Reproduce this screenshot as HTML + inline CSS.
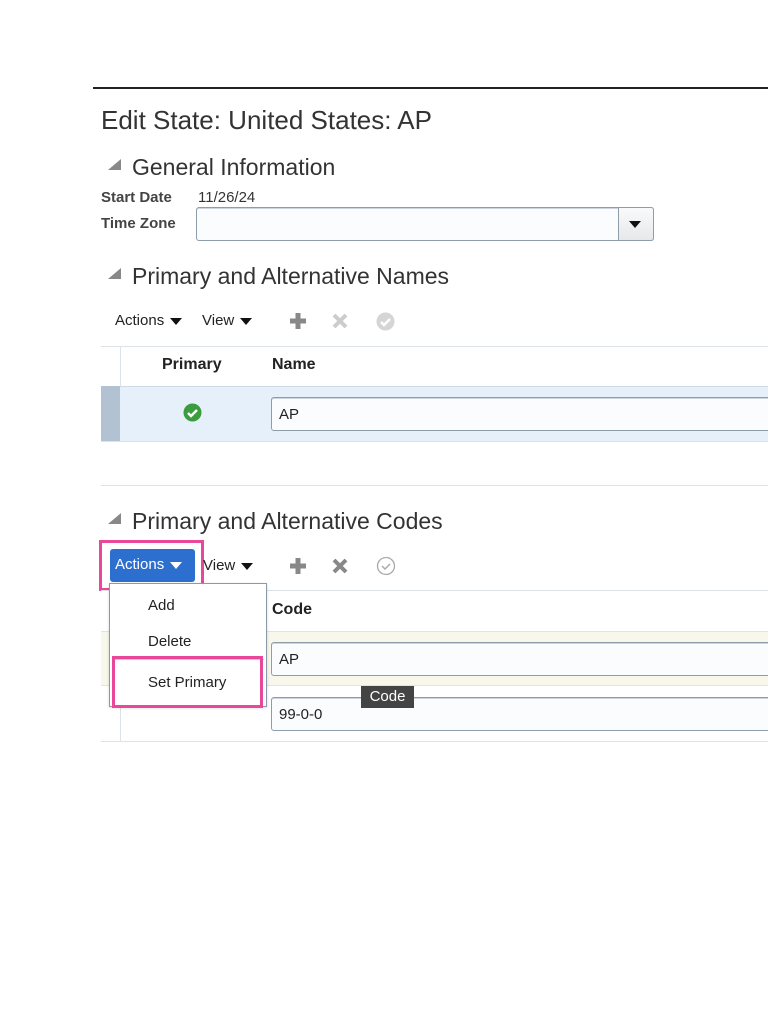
<!DOCTYPE html>
<html><head><meta charset="utf-8"><style>
*{margin:0;padding:0;box-sizing:border-box}
body{width:768px;height:1024px;background:#fff;position:relative;overflow:hidden;font-family:"Liberation Sans",Arial,sans-serif;color:#222}
.a{position:absolute;white-space:nowrap}
.h{font-size:23px;color:#333}
.tri{position:absolute;width:0;height:0;border-left:13px solid transparent;border-bottom:11px solid #888}
.lbl{font-size:15px;font-weight:bold;color:#444}
.inp{position:absolute;background:#fbfcfe;border:1px solid #8f9caa;border-radius:3px;font-size:15px;padding-left:7px;display:flex;align-items:center;box-shadow:inset 0 1px 0 #cdd5de}
.line{position:absolute;height:1px;background:#dde2e7}
.tb{font-size:15px;color:#222}
.dn{display:inline-block;width:0;height:0;border-left:6px solid transparent;border-right:6px solid transparent;border-top:7px solid #111;vertical-align:middle;margin-left:6px}
.pink{position:absolute;border:3px solid #e8479a}
</style></head><body>
<div class="a" style="left:93px;top:87px;width:675px;height:2px;background:#222"></div>
<div class="a" style="left:101px;top:105px;font-size:26px;color:#333">Edit State: United States: AP</div>

<div class="tri" style="left:108px;top:159px"></div>
<div class="a h" style="left:132px;top:154px">General Information</div>
<div class="a lbl" style="left:101px;top:189px">Start Date</div>
<div class="a" style="left:198px;top:189px;font-size:15px;color:#333">11/26/24</div>
<div class="a lbl" style="left:101px;top:215px">Time Zone</div>
<div class="inp" style="left:196px;top:207px;width:458px;height:34px"></div>
<div class="a" style="left:618px;top:207px;width:36px;height:34px;border:1px solid #8f9caa;border-radius:0 3px 3px 0;background:linear-gradient(#fafafa,#e6e8eb)"><span class="dn" style="position:absolute;left:10px;top:13px;margin:0"></span></div>

<div class="tri" style="left:108px;top:268px"></div>
<div class="a h" style="left:132px;top:263px">Primary and Alternative Names</div>
<div class="a tb" style="left:115px;top:312px">Actions<span class="dn"></span></div>
<div class="a tb" style="left:202px;top:312px">View<span class="dn"></span></div>
<svg class="a" style="left:288px;top:311px" width="20" height="20"><path d="M10 2v16M2 10h16" stroke="#888" stroke-width="5"/></svg>
<svg class="a" style="left:331px;top:312px" width="18" height="18"><path d="M3 3l12 12M15 3L3 15" stroke="#ccc" stroke-width="4"/></svg>
<svg class="a" style="left:376px;top:312px" width="19" height="19"><circle cx="9.5" cy="9.5" r="9" fill="#d5d5d5"/><path d="M5 10l3 3 6-6" stroke="#fff" stroke-width="2.5" fill="none"/></svg>

<div class="line" style="left:101px;top:346px;width:667px"></div>
<div class="a" style="left:120px;top:346px;width:1px;height:95px;background:#dde2e7"></div>
<div class="a" style="left:162px;top:356px;font-size:16px;font-weight:bold">Primary</div>
<div class="a" style="left:272px;top:356px;font-size:16px;font-weight:bold">Name</div>
<div class="a" style="left:101px;top:386px;width:667px;height:55px;background:#e6f0fb;border-top:1px solid #d0dae6"></div>
<div class="a" style="left:101px;top:386px;width:19px;height:55px;background:#b3c2d2"></div>
<svg class="a" style="left:183px;top:403px" width="19" height="19"><circle cx="9.5" cy="9.5" r="9" fill="#3a9c3e"/><path d="M5 10l3 3 6-6" stroke="#fff" stroke-width="2.5" fill="none"/></svg>
<div class="inp" style="left:271px;top:397px;width:520px;height:34px">AP</div>
<div class="line" style="left:101px;top:441px;width:667px"></div>
<div class="line" style="left:101px;top:485px;width:667px"></div>

<div class="tri" style="left:108px;top:513px"></div>
<div class="a h" style="left:132px;top:508px">Primary and Alternative Codes</div>
<div class="a" style="left:110px;top:549px;width:85px;height:33px;background:#2d6fcf;border-radius:3px;color:#fff;font-size:15px;padding:7px 0 0 5px">Actions<span class="dn" style="border-top-color:#fff"></span></div>
<div class="pink" style="left:99px;top:540px;width:105px;height:51px"></div>
<div class="a tb" style="left:203px;top:557px">View<span class="dn"></span></div>
<svg class="a" style="left:288px;top:556px" width="20" height="20"><path d="M10 2v16M2 10h16" stroke="#888" stroke-width="5"/></svg>
<svg class="a" style="left:331px;top:557px" width="18" height="18"><path d="M3 3l12 12M15 3L3 15" stroke="#888" stroke-width="4"/></svg>
<svg class="a" style="left:376px;top:556px" width="20" height="20"><circle cx="10" cy="10" r="8.5" fill="none" stroke="#aaa" stroke-width="1.3"/><path d="M6 10l3 3 5-5" stroke="#aaa" stroke-width="1.5" fill="none"/></svg>

<div class="line" style="left:101px;top:590px;width:667px"></div>
<div class="a" style="left:120px;top:590px;width:1px;height:151px;background:#dde2e7"></div>
<div class="a" style="left:272px;top:601px;font-size:16px;font-weight:bold">Code</div>
<div class="a" style="left:101px;top:631px;width:667px;height:55px;background:#f7f7ec;border-top:1px solid #e4e4d8;border-bottom:1px solid #e4e4d8"></div>
<div class="inp" style="left:271px;top:642px;width:520px;height:34px">AP</div>
<div class="inp" style="left:271px;top:697px;width:520px;height:34px">99-0-0</div>
<div class="line" style="left:101px;top:741px;width:667px"></div>

<div class="a" style="left:109px;top:583px;width:158px;height:124px;background:#fff;border:1px solid #8c99a8;box-shadow:0 1px 3px rgba(0,0,0,.15)"></div>
<div class="a" style="left:148px;top:597px;font-size:15px">Add</div>
<div class="a" style="left:148px;top:633px;font-size:15px">Delete</div>
<div class="a" style="left:112px;top:659px;width:152px;height:1px;background:#ccc"></div>
<div class="a" style="left:148px;top:674px;font-size:15px">Set Primary</div>
<div class="pink" style="left:112px;top:656px;width:151px;height:52px"></div>

<div class="a" style="left:361px;top:686px;width:53px;height:22px;background:#444;color:#fff;font-size:15px;text-align:center;line-height:22px">Code</div>
</body></html>
